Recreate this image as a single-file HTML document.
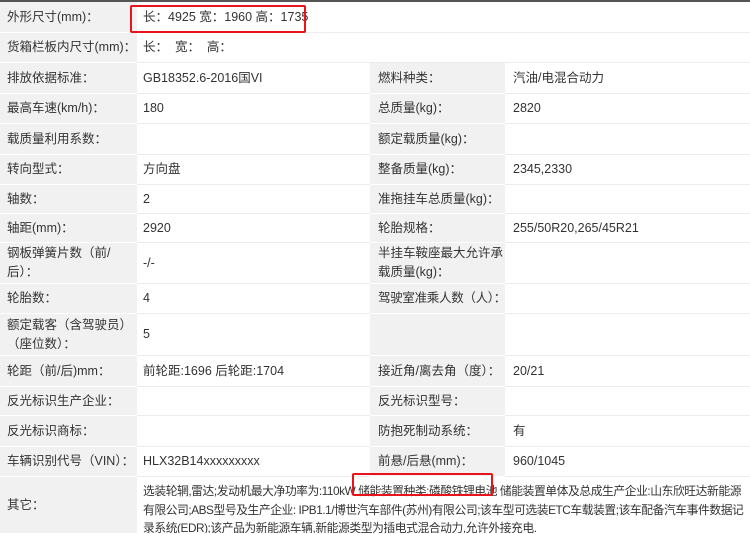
<!DOCTYPE html>
<html><head><meta charset="utf-8"><style>
body{margin:0;width:750px;height:533px;overflow:hidden;background:#fff;font-family:"Liberation Sans","Noto Sans CJK SC",sans-serif;font-size:12.5px;color:#333;position:relative}
.top{position:absolute;left:0;top:0;width:750px;height:2px;background:#555}
.r{position:absolute;left:0;width:750px;border-bottom:1px solid #ececec;box-sizing:border-box}
.c{position:absolute;top:0;bottom:0;display:flex;align-items:center;box-sizing:border-box;line-height:19px}
.a{left:0;width:137px;background:#f1f1f1;padding-left:7px;border-bottom:1px solid #fff;bottom:-1px}
.b{left:137px;width:233px;padding-left:6px}
.b2{left:137px;width:613px;padding-left:6px}
.d{left:370px;width:135px;background:#f1f1f1;padding-left:8px;border-bottom:1px solid #fff;bottom:-1px;white-space:nowrap}
.e{left:505px;width:245px;padding-left:8px}
.box{position:absolute;border:2.5px solid #e8131b;border-radius:2px}
</style></head><body>
<div class="top"></div>
<div class="r" style="top:2px;height:31px"><div class="c a">外形尺寸(mm)：</div><div class="c b2">长：4925 宽：1960 高：1735</div></div>
<div class="r" style="top:33px;height:30px"><div class="c a" style="white-space:nowrap">货箱栏板内尺寸(mm)：</div><div class="c b2">长：&nbsp; 宽：&nbsp; 高：</div></div>
<div class="r" style="top:63px;height:31px"><div class="c a">排放依据标准：</div><div class="c b">GB18352.6-2016国VI</div><div class="c d">燃料种类：</div><div class="c e">汽油/电混合动力</div></div>
<div class="r" style="top:94px;height:30px"><div class="c a">最高车速(km/h)：</div><div class="c b">180</div><div class="c d">总质量(kg)：</div><div class="c e">2820</div></div>
<div class="r" style="top:124px;height:31px"><div class="c a">载质量利用系数：</div><div class="c b"></div><div class="c d">额定载质量(kg)：</div><div class="c e"></div></div>
<div class="r" style="top:155px;height:30px"><div class="c a">转向型式：</div><div class="c b">方向盘</div><div class="c d">整备质量(kg)：</div><div class="c e">2345,2330</div></div>
<div class="r" style="top:185px;height:29px"><div class="c a">轴数：</div><div class="c b">2</div><div class="c d">准拖挂车总质量(kg)：</div><div class="c e"></div></div>
<div class="r" style="top:214px;height:29px"><div class="c a">轴距(mm)：</div><div class="c b">2920</div><div class="c d">轮胎规格：</div><div class="c e">255/50R20,265/45R21</div></div>
<div class="r" style="top:243px;height:41px"><div class="c a">钢板弹簧片数（前/<br>后）：</div><div class="c b">-/-</div><div class="c d" style="white-space:normal">半挂车鞍座最大允许承载质量(kg)：</div><div class="c e"></div></div>
<div class="r" style="top:284px;height:30px"><div class="c a">轮胎数：</div><div class="c b">4</div><div class="c d" style="letter-spacing:-0.3px">驾驶室准乘人数（人）：</div><div class="c e"></div></div>
<div class="r" style="top:314px;height:42px"><div class="c a">额定载客（含驾驶员）<br>（座位数）：</div><div class="c b">5</div><div class="c d"></div><div class="c e"></div></div>
<div class="r" style="top:356px;height:31px"><div class="c a">轮距（前/后)mm：</div><div class="c b">前轮距:1696 后轮距:1704</div><div class="c d">接近角/离去角（度）：</div><div class="c e">20/21</div></div>
<div class="r" style="top:387px;height:29px"><div class="c a">反光标识生产企业：</div><div class="c b"></div><div class="c d">反光标识型号：</div><div class="c e"></div></div>
<div class="r" style="top:416px;height:31px"><div class="c a">反光标识商标：</div><div class="c b"></div><div class="c d">防抱死制动系统：</div><div class="c e">有</div></div>
<div class="r" style="top:447px;height:30px"><div class="c a" style="white-space:nowrap">车辆识别代号（VIN）：</div><div class="c b">HLX32B14xxxxxxxxx</div><div class="c d">前悬/后悬(mm)：</div><div class="c e">960/1045</div></div>
<div class="r" style="top:477px;height:56px;border:none"><div class="c a">其它：</div><div class="c b2" style="font-size:11.8px;letter-spacing:-0.45px;line-height:18.5px;padding-right:0;align-items:flex-start;padding-top:5px;white-space:nowrap;overflow:hidden">选装轮辋,雷达;发动机最大净功率为:110kW 储能装置种类:磷酸铁锂电池 储能装置单体及总成生产企业:山东欣旺达新能源<br>有限公司;ABS型号及生产企业: IPB1.1/博世汽车部件(苏州)有限公司;该车型可选装ETC车载装置;该车配备汽车事件数据记<br>录系统(EDR);该产品为新能源车辆,新能源类型为插电式混合动力,允许外接充电.</div></div>
<div class="box" style="left:352px;top:473px;width:137px;height:19px"></div>
<div class="box" style="left:130px;top:5px;width:172px;height:24px"></div>
</body></html>
